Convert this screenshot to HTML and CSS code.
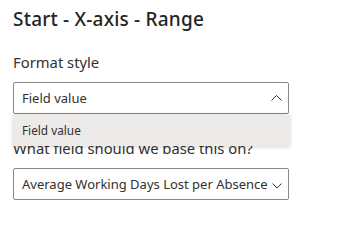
FILE: index.html
```html
<!DOCTYPE html>
<html>
<head>
<meta charset="utf-8">
<link rel="stylesheet" href="styles.css">
</head>
<body>
<div class="panel">
  <div class="title">Start - X-axis - Range</div>
  <div class="label first">Format style</div>
  <div class="dropdown open">
    <span class="value">Field value</span>
    <svg class="chev" width="11" height="6" viewBox="0 0 11 6"><path d="M0.5 5.5 L5.5 0.5 L10.5 5.5" fill="none" stroke="#323130" stroke-width="1"/></svg>
    <div class="menu"><div class="option">Field value</div></div>
  </div>
  <div class="label second">What field should we base this on?</div>
  <div class="dropdown">
    <span class="value">Average Working Days Lost per Absence</span>
    <svg class="chev down" width="10" height="6" viewBox="0 0 10 6"><path d="M0.5 0.5 L5 5 L9.5 0.5" fill="none" stroke="#323130" stroke-width="1"/></svg>
  </div>
</div>
</body>
</html>
```
FILE: styles.css
```css
html, body { margin: 0; padding: 0; background: #ffffff; }
body { font-family: "Noto Sans", "Open Sans", sans-serif; color: #323130; }
.panel { width: 276px; padding: 0 0 0 13px; }
.title { font-size: 19px; font-weight: 500; color: #252423; line-height: 24px; padding-top: 7px; letter-spacing: 0.2px; }
.label { font-size: 14.8px; line-height: 20px; color: #323130; }
.label.first { margin-top: 21px; }
.label.second { margin-top: 24px; }
.dropdown { position: relative; height: 30px; border: 1px solid #8a8886; border-radius: 2px; margin-top: 10px; display: flex; align-items: center; padding: 0 6px 0 8px; }
.dropdown .value { flex: 1; font-size: 13px; white-space: nowrap; overflow: hidden; color: #323130; }
.dropdown .chev { flex: none; }
.dropdown .chev.down { margin-top: 3px; }
.menu { position: absolute; top: 31px; left: -1px; width: 277px; height: 32px; background: #edebe9; box-shadow: 0 1px 4px rgba(0,0,0,0.18); display: flex; align-items: center; z-index: 2; }
.option { font-size: 11.8px; padding-left: 9px; color: #323130; }
```
